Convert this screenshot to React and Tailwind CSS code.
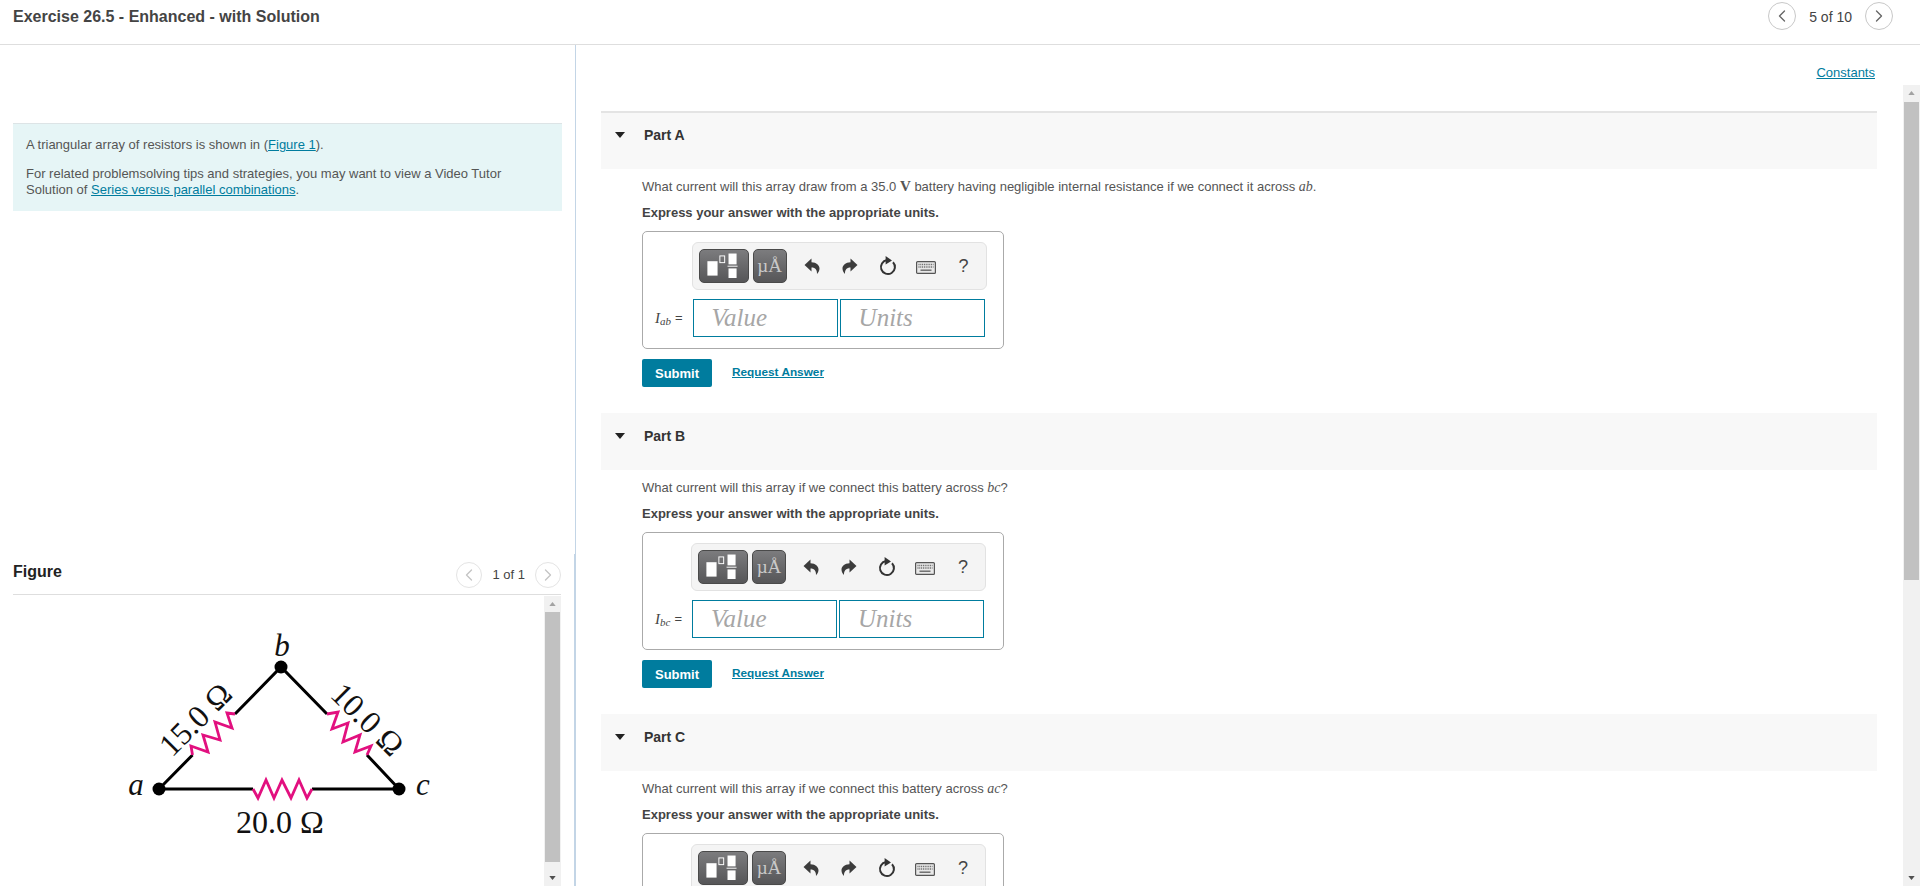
import React from 'react';
import { ChevronLeft, ChevronRight } from 'lucide-react';

const PagerButton = ({ dir, light }) => {
    const Icon = dir === 'left' ? ChevronLeft : ChevronRight;
    return (
        <span className={`flex items-center justify-center rounded-full border ${light ? 'w-[26px] h-[26px] border-[#e4e4e4] text-[#c4c4c4]' : 'w-[28px] h-[28px] border-[#c8c8c8] text-[#666666]'}`}>
            <Icon className="w-[20px] h-[20px]" strokeWidth={1.6} />
        </span>
    );
};

const TemplateIcon = () => (
    <svg viewBox="0 0 50 34" className="w-[50px] h-[34px]">
        <rect x="7.7" y="12" width="10.6" height="15" fill="#fff" />
        <rect x="20.7" y="6.5" width="5" height="7" fill="none" stroke="#fff" strokeWidth="1" />
        <rect x="29.7" y="4" width="8.4" height="11.3" fill="#fff" />
        <rect x="28.7" y="16.7" width="10.4" height="1" fill="#fff" />
        <rect x="29.7" y="19.5" width="8.4" height="10" fill="#fff" />
    </svg>
);

const UndoIcon = ({ flip }) => (
    <svg viewBox="0 0 16 17" className={`w-[16px] h-[17px] ${flip ? '-scale-x-100' : ''}`}>
        <path d="M0.5 7L7.5 0.5V4.3C12.5 4.3 15.5 7.5 15.5 10.5C15.5 12.5 14.5 14.5 13 16C13.2 12 11.5 9.5 7.5 9.5V13.5Z" fill="#3c3c3c" />
    </svg>
);

const ReloadIcon = () => (
    <svg viewBox="0 0 18 20" className="w-[18px] h-[20px]" fill="none">
        <path d="M8 4.1A7 7 0 1 0 14 6.2" stroke="#333333" strokeWidth="2" />
        <path d="M6.6 0L13 4.4L6.6 8.4Z" fill="#333333" />
    </svg>
);

const KeyboardIcon = () => (
    <svg viewBox="0 0 20 13" className="w-[20px] h-[13px]" fill="none">
        <rect x="0.6" y="0.6" width="18.8" height="11.8" rx="1" fill="#e8e8e8" stroke="#555555" strokeWidth="1.2" />
        <path d="M2.5 3.5H17.5M2.5 6H17.5" stroke="#666666" strokeWidth="1.3" strokeDasharray="1 0.8" />
        <path d="M4.5 9.2H15.5" stroke="#666666" strokeWidth="1.4" />
    </svg>
);

const Toolbar = () => (
    <div className="flex items-center w-[295px] h-[48px] -ml-[1px] rounded-[6px] border border-[#e2e2e2] bg-[#f4f4f4] pl-[6px]">
        <span className="flex items-center justify-center w-[50px] h-[34px] rounded-[5px] border border-[#4a4a4a] bg-gradient-to-b from-[#7c7c7e] to-[#565658]">
            <TemplateIcon />
        </span>
        <span className="flex items-center justify-center w-[34px] h-[34px] ml-[4px] rounded-[5px] border border-[#4a4a4a] bg-gradient-to-b from-[#7c7c7e] to-[#565658] text-[#c9c9c9] text-[19px] font-['Liberation_Serif',serif]">
            µÅ
        </span>
        <span className="flex justify-center w-[16px] ml-[17px]"><UndoIcon /></span>
        <span className="flex justify-center w-[16px] ml-[22px]"><UndoIcon flip /></span>
        <span className="flex justify-center w-[18px] ml-[21px]"><ReloadIcon /></span>
        <span className="flex justify-center w-[20px] ml-[19px] mt-[3px]"><KeyboardIcon /></span>
        <span className="ml-[23px] text-[18px] text-[#444444]">?</span>
    </div>
);

const Part = ({ name, sub, children, first, height }) => (
    <div className={height}>
        <div className={`flex items-start bg-[#f8f8f8] ${first ? 'h-[58px] border-t-2 border-[#e4e4e4]' : 'h-[57px]'}`}>
            <svg viewBox="0 0 10 6" className={`w-[10px] h-[6px] ml-[14px] ${first ? 'mt-[19px]' : 'mt-[20px]'}`}>
                <path d="M0 0H10L5 6Z" fill="#222222" />
            </svg>
            <span className={`ml-[19px] text-[14px] font-bold text-[#333333] ${first ? 'mt-[12px]' : 'mt-[13px]'}`}>{name}</span>
        </div>
        <div className="ml-[41px] w-[362px]">
            <p className="mt-[10px] h-[16px] leading-[16px] text-[13px] text-[#555555] whitespace-nowrap">{children}</p>
            <p className="mt-[10px] h-[16px] leading-[16px] text-[13px] font-bold text-[#444444] whitespace-nowrap">Express your answer with the appropriate units.</p>
            <div className="mt-[10px] h-[118px] rounded-[5px] border border-[#aaaaaa] grid grid-cols-[auto_1fr] content-start pt-[10px]">
                <span />
                <Toolbar />
                <span className="flex items-center pl-[12px] pr-[10px] mt-[9px] text-[#444444] text-[15px] font-['Liberation_Serif',serif] whitespace-nowrap">
                    <i>I</i><i className="text-[11px] translate-y-[3px]">{sub}</i>
                    <span className="ml-[4px] text-[13px] font-['Liberation_Sans',sans-serif]">=</span>
                </span>
                <div className="flex gap-[2px] mt-[9px]">
                    <span className="flex items-center w-[145px] h-[38px] border border-[#007c9e] pl-[18px] font-['Liberation_Serif',serif] italic text-[25px] text-[#a6a6a6]">Value</span>
                    <span className="flex items-center w-[145px] h-[38px] border border-[#007c9e] pl-[18px] font-['Liberation_Serif',serif] italic text-[25px] text-[#a6a6a6]">Units</span>
                </div>
            </div>
            <div className="flex items-center mt-[10px]">
                <span className="flex items-center justify-center w-[70px] h-[28px] pt-[1px] rounded-[2px] bg-[#007c9e] text-white text-[13px] font-bold">Submit</span>
                <a className="ml-[20px] text-[11.8px] font-bold text-[#007c9e] underline">Request Answer</a>
            </div>
        </div>
    </div>
);

const Scrollbar = ({ thumbTop, thumbHeight }) => (
    <div className="relative w-[17px] h-full bg-[#f1f1f1]">
        <svg viewBox="0 0 8 5" className="absolute left-[5px] top-[6px] w-[7px] h-[4px]"><path d="M0 5H8L4 0Z" fill="#a3a3a3" /></svg>
        <div className="absolute left-[1px] right-[1px] bg-[#c1c1c1]" style={{ top: thumbTop, height: thumbHeight }} />
        <svg viewBox="0 0 8 5" className="absolute left-[5px] bottom-[6px] w-[7px] h-[4px]"><path d="M0 0H8L4 5Z" fill="#505050" /></svg>
    </div>
);

const Circuit = () => (
    <svg viewBox="0 0 320 200" className="w-[320px] h-[200px] ml-[120px] mt-[45px] overflow-visible">
        <g stroke="#000" strokeWidth="3" fill="none">
            <path d="M39 149L72.5 115M115 74L161 27L207 74M247 115L279 149M133 149H39M192 149H279" />
        </g>
        <g stroke="#e2107f" strokeWidth="2.8" fill="none" strokeLinejoin="miter">
            <path d="M72.5 115L71 106L88 112L83 95L100 100L95 82L112 88L107 73L115 74" />
            <path d="M207 74L218 72L212 89L228 83L223 102L240 95L235 112L251 106L247 115" />
            <path d="M133 149L138 158L146 140L154 158L162 140L171 158L179 140L187 158L192 149" />
        </g>
        <circle cx="39" cy="149" r="6.5" fill="#000" />
        <circle cx="161" cy="27" r="6.5" fill="#000" />
        <circle cx="279" cy="149" r="6.5" fill="#000" />
        <g fontFamily="'Liberation Serif', serif" fill="#111111">
            <text x="162" y="16" fontSize="31" fontStyle="italic" textAnchor="middle">b</text>
            <text x="16" y="155" fontSize="31" fontStyle="italic" textAnchor="middle">a</text>
            <text x="303" y="155" fontSize="31" fontStyle="italic" textAnchor="middle">c</text>
            <text x="160" y="193" fontSize="32" textAnchor="middle">20.0 Ω</text>
            <text fontSize="32" textAnchor="middle" transform="translate(83 87) rotate(-45)">15.0 Ω</text>
            <text fontSize="32" textAnchor="middle" transform="translate(240 87) rotate(45)">10.0 Ω</text>
        </g>
    </svg>
);

const serif = "font-['Liberation_Serif',serif]";

export default function App() {
    return (
        <div className="flex flex-col w-[1920px] h-[886px] overflow-hidden bg-white font-['Liberation_Sans',sans-serif] text-[#444444]">
            <header className="flex items-center justify-between h-[45px] shrink-0 border-b border-[#dedede] pl-[13px] pr-[27px]">
                <h1 className="text-[16px] font-bold text-[#444444] -mt-[10px]">Exercise 26.5 - Enhanced - with Solution</h1>
                <div className="flex items-center -mt-[12px]">
                    <PagerButton dir="left" />
                    <span className="mx-[13px] text-[14px] mt-[2px]">5 of 10</span>
                    <PagerButton dir="right" />
                </div>
            </header>
            <div className="flex flex-1 min-h-0">
                <div className="flex flex-col w-[576px] shrink-0 border-r border-[#c3d5e6]">
                    <div className="h-[509px] shrink-0 pt-[78px] px-[13px]">
                        <div className="h-[88px] bg-[#e6f5f6] border-t border-[#dde4e6] px-[13px] pt-[13px] text-[13px] leading-[16px] text-[#555555]">
                            <p>A triangular array of resistors is shown in (<a className="text-[#007c9e] underline">Figure 1</a>).</p>
                            <p className="mt-[13px] w-[500px]">For related problemsolving tips and strategies, you may want to view a Video Tutor Solution of <a className="text-[#007c9e] underline">Series versus parallel combinations</a>.</p>
                        </div>
                    </div>
                    <div className="flex flex-col flex-1 min-h-0 border-r border-[#c3d5e6]">
                        <div className="flex items-center justify-between h-[41px] shrink-0 mx-[13px] border-b border-[#dedede]">
                            <span className="text-[16px] font-bold text-[#222222] -mt-[4px]">Figure</span>
                            <div className="flex items-center mt-[2px] text-[13px]">
                                <PagerButton dir="left" light />
                                <span className="mx-[10px]">1 of 1</span>
                                <PagerButton dir="right" light />
                            </div>
                        </div>
                        <div className="flex flex-1 min-h-0 justify-between mr-[13px]">
                            <Circuit />
                            <div className="h-[290px] mt-[1px]"><Scrollbar thumbTop="16px" thumbHeight="250px" /></div>
                        </div>
                    </div>
                </div>
                <div className="flex flex-col flex-1 min-w-0">
                    <div className="h-[40px] shrink-0 flex justify-end items-start pr-[45px] pt-[18px]">
                        <a className="text-[13px] text-[#007c9e] underline">Constants</a>
                    </div>
                    <div className="flex flex-1 min-h-0">
                        <div className="flex-1 min-w-0 overflow-hidden pl-[25px] pr-[26px] pt-[26px]">
                            <Part first height="h-[302px]" name="Part A" sub="ab">
                                What current will this array draw from a 35.0 <span className={`${serif} text-[15px] font-bold leading-none`}>V</span> battery having negligible internal resistance if we connect it across <i className={`${serif} text-[14px] leading-none`}>ab</i>.
                            </Part>
                            <Part height="h-[301px]" name="Part B" sub="bc">
                                What current will this array if we connect this battery across <i className={`${serif} text-[14px] leading-none`}>bc</i>?
                            </Part>
                            <Part height="h-[301px]" name="Part C" sub="ac">
                                What current will this array if we connect this battery across <i className={`${serif} text-[14px] leading-none`}>ac</i>?
                            </Part>
                        </div>
                        <Scrollbar thumbTop="17px" thumbHeight="478px" />
                    </div>
                </div>
            </div>
        </div>
    );
}
